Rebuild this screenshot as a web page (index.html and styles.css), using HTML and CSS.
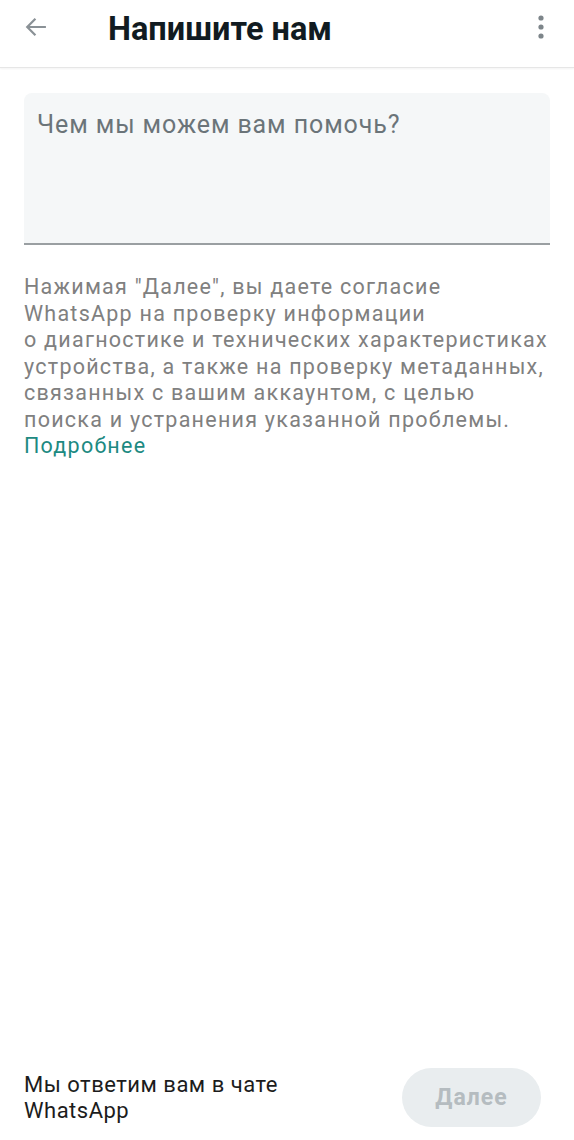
FILE: index.html
```html
<!DOCTYPE html>
<html lang="ru">
<head>
<meta charset="utf-8">
<title>Напишите нам</title>
<link rel="stylesheet" href="styles.css">
</head>
<body>
<div class="screen">
  <header class="appbar">
    <svg class="back" width="28" height="28" viewBox="0 0 24 24" aria-hidden="true">
      <path d="M20.5 12H4.5M11.5 5L4.5 12l7 7" fill="none" stroke="#8a9196" stroke-width="1.9"/>
    </svg>
    <h1 class="title">Напишите нам</h1>
    <svg class="kebab" width="8" height="24" viewBox="0 0 8 24" aria-hidden="true">
      <circle cx="4" cy="3" r="2.6" fill="#7d858a"/>
      <circle cx="4" cy="12" r="2.6" fill="#7d858a"/>
      <circle cx="4" cy="21" r="2.6" fill="#7d858a"/>
    </svg>
  </header>
  <main class="content">
    <div class="field">
      <div class="placeholder">Чем мы можем вам помочь?</div>
    </div>
    <p class="notice">Нажимая "Далее", вы даете согласие<br>WhatsApp на проверку информации<br>о диагностике и технических характеристиках<br>устройства, а также на проверку метаданных,<br>связанных с вашим аккаунтом, с целью<br>поиска и устранения указанной проблемы.<br><span class="link">Подробнее</span></p>
  </main>
  <footer class="footer">
    <div class="reply">Мы ответим вам в чате<br>WhatsApp</div>
    <button class="next" disabled>Далее</button>
  </footer>
</div>
</body>
</html>
```
FILE: styles.css
```css
html, body {
  margin: 0;
  padding: 0;
  background: #ffffff;
}
body {
  font-family: Roboto, "Noto Sans", sans-serif;
}
.screen {
  width: 574px;
  height: 1140px;
  display: flex;
  flex-direction: column;
  box-sizing: border-box;
}
.appbar {
  height: 68px;
  display: flex;
  align-items: center;
  padding: 0 29px 0 22px;
  border-bottom: 1px solid #e6e6e6;
  box-shadow: 0 1px 2px rgba(0,0,0,0.05);
  box-sizing: border-box;
  flex-shrink: 0;
}
.back {
  display: block;
  margin-top: -13px;
}
.title {
  margin: -10px 0 0 58px;
  font-size: 32.5px;
  font-weight: 700;
  color: #111b21;
  flex: 1;
  letter-spacing: 0;
}
.kebab {
  display: block;
  margin-top: -14px;
}
.content {
  flex: 1;
  padding: 25px 24px 0 24px;
}
.field {
  height: 152px;
  background: #f5f7f8;
  border-radius: 8px 8px 0 0;
  border-bottom: 2px solid #9a9fa2;
  padding: 16px 13px 0 13px;
  box-sizing: border-box;
}
.placeholder {
  font-size: 25px;
  letter-spacing: 0.9px;
  color: #6b7479;
  line-height: 32px;
  white-space: nowrap;
}
.notice {
  margin: 29px 0 0 0;
  font-size: 21.5px;
  line-height: 26.5px;
  letter-spacing: 1.25px;
  color: #808080;
  white-space: nowrap;
}
.link {
  color: #1d8a82;
}
.footer {
  display: flex;
  align-items: center;
  justify-content: space-between;
  padding: 0 33px 13px 24px;
  flex-shrink: 0;
}
.reply {
  font-size: 22px;
  letter-spacing: 0.5px;
  line-height: 26px;
  color: #1c1c1c;
}
.next {
  width: 139px;
  height: 59px;
  border: none;
  border-radius: 30px;
  background: #e9edef;
  color: #b5bcc0;
  font-family: Roboto, "Noto Sans", sans-serif;
  font-size: 23px;
  font-weight: 700;
  letter-spacing: 1px;
  padding: 0;
}
```
